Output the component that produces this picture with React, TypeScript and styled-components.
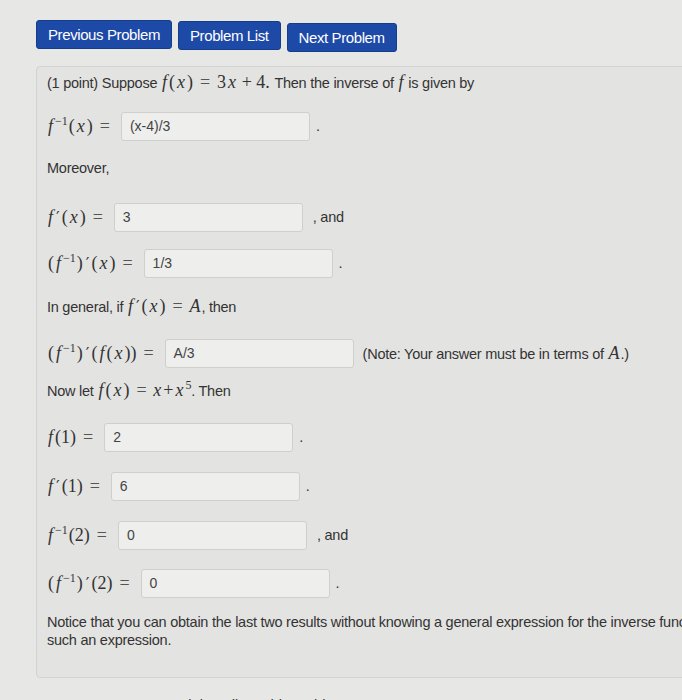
import styled, { createGlobalStyle } from "styled-components";
import React from "react";

const GlobalStyle = createGlobalStyle`
  html, body {
    margin: 0;
    padding: 0;
    background: #e7e7e6;
    overflow: hidden;
  }
  body {
    font-family: "Liberation Sans", Arial, sans-serif;
    color: #333;
  }
`;

const Page = styled.div`
  width: 682px;
  height: 700px;
  padding: 20px 0 0 36px;
  box-sizing: border-box;
  overflow: hidden;
`;

const Nav = styled.div`
  display: flex;
  gap: 6px;
  align-items: flex-start;
`;

const NavButton = styled.button<{ $drop?: number }>`
  height: 29px;
  margin-top: ${({ $drop }) => $drop || 0}px;
  padding: 0 11px;
  background: #1d49a7;
  border: 1px solid #163c8c;
  border-radius: 3px;
  color: #fff;
  font-family: "Liberation Sans", Arial, sans-serif;
  font-size: 15px;
  letter-spacing: -0.4px;
  cursor: pointer;
`;

const ProblemBox = styled.div`
  width: 760px;
  margin-top: 14px;
  padding: 6px 10px 28px 10px;
  background: #e3e3e2;
  border: 1px solid #d3d3d2;
  border-radius: 4px;
  box-sizing: border-box;
`;

const Line = styled.div<{ $top?: number }>`
  margin-top: ${({ $top }) => $top || 0}px;
  height: 18px;
  font-size: 14.5px;
  line-height: 18px;
  letter-spacing: -0.25px;
  white-space: nowrap;
`;

const AnswerRow = styled.div<{ $top?: number }>`
  display: flex;
  align-items: center;
  height: 30px;
  margin-top: ${({ $top }) => $top || 0}px;
  font-size: 14.5px;
`;

const Label = styled.span`
  margin-right: 5px;
  white-space: nowrap;
  line-height: 18px;
`;

const AnswerInput = styled.div`
  width: 189px;
  height: 29px;
  box-sizing: border-box;
  padding: 0 8px;
  display: flex;
  align-items: center;
  background: #eeeeed;
  border: 1px solid #cfcfce;
  border-radius: 3px;
  font-size: 14px;
  color: #444;
`;

const After = styled.span<{ $gap?: number }>`
  margin-left: ${({ $gap }) => $gap || 6}px;
  font-size: 14.5px;
  letter-spacing: -0.25px;
  white-space: nowrap;
`;

const M = styled.span`
  font-family: "Liberation Serif", "DejaVu Serif", serif;
  font-style: italic;
  font-size: 18px;
  line-height: 18px;
  letter-spacing: 0;
  padding: 0 1px;
`;

const R = styled.span`
  font-family: "Liberation Serif", "DejaVu Serif", serif;
  font-style: normal;
  font-size: 18px;
  line-height: 18px;
  letter-spacing: 0;
  padding: 0 1px;
`;

const Sup = styled.sup`
  font-family: "Liberation Serif", "DejaVu Serif", serif;
  font-size: 12px;
  line-height: 0;
  vertical-align: 7px;
  font-style: normal;
  margin-left: 1px;
`;

const Prime = styled.span`
  font-family: "DejaVu Serif", serif;
  font-size: 16px;
  line-height: 18px;
  margin: 0 1px 0 2px;
`;

const Eq = styled.span`
  font-family: "Liberation Serif", serif;
  font-style: normal;
  font-size: 18px;
  line-height: 18px;
  margin: 0 6px;
  color: #555;
`;

const Cut = styled.div`
  margin-top: 18px;
  height: 10px;
  overflow: hidden;
  font-size: 14.5px;
  line-height: 18px;
`;

const FInv = () => (
  <>
    <M>f</M>
    <Sup>−1</Sup>
  </>
);

const FInvPrime = () => (
  <>
    <R>(</R>
    <M>f</M>
    <Sup>−1</Sup>
    <R>)</R>
    <Prime>′</Prime>
  </>
);

export default function App() {
  return (
    <>
      <GlobalStyle />
      <Page>
        <Nav>
          <NavButton>Previous Problem</NavButton>
          <NavButton $drop={1}>Problem List</NavButton>
          <NavButton $drop={3}>Next Problem</NavButton>
        </Nav>
        <ProblemBox>
          <Line>
            (1 point) Suppose <M>f</M>
            <R>(</R>
            <M>x</M>
            <R>)</R>
            <Eq>=</Eq>
            <R>3</R>
            <M>x</M> <R>+ 4.</R> Then the inverse of <M>f</M> is given by
          </Line>

          <AnswerRow $top={20}>
            <Label>
              <FInv />
              <R>(</R>
              <M>x</M>
              <R>)</R>
              <Eq>=</Eq>
            </Label>
            <AnswerInput>(x-4)/3</AnswerInput>
            <After>.</After>
          </AnswerRow>

          <Line $top={18}>Moreover,</Line>

          <AnswerRow $top={25}>
            <Label>
              <M>f</M>
              <Prime>′</Prime>
              <R>(</R>
              <M>x</M>
              <R>)</R>
              <Eq>=</Eq>
            </Label>
            <AnswerInput>3</AnswerInput>
            <After $gap={10}>, and</After>
          </AnswerRow>

          <AnswerRow $top={16}>
            <Label>
              <FInvPrime />
              <R>(</R>
              <M>x</M>
              <R>)</R>
              <Eq>=</Eq>
            </Label>
            <AnswerInput>1/3</AnswerInput>
            <After>.</After>
          </AnswerRow>

          <Line $top={19}>
            In general, if <M>f</M>
            <Prime>′</Prime>
            <R>(</R>
            <M>x</M>
            <R>)</R>
            <Eq>=</Eq>
            <M>A</M>, then
          </Line>

          <AnswerRow $top={23}>
            <Label>
              <FInvPrime />
              <R>(</R>
              <M>f</M>
              <R>(</R>
              <M>x</M>
              <R>))</R>
              <Eq>=</Eq>
            </Label>
            <AnswerInput>A/3</AnswerInput>
            <After $gap={9}>
              (Note: Your answer must be in terms of <M>A</M>.)
            </After>
          </AnswerRow>

          <Line $top={13}>
            Now let <M>f</M>
            <R>(</R>
            <M>x</M>
            <R>)</R>
            <Eq>=</Eq>
            <M>x</M>
            <R>+</R>
            <M>x</M>
            <Sup>5</Sup>. Then
          </Line>

          <AnswerRow $top={23}>
            <Label>
              <M>f</M>
              <R>(1)</R>
              <Eq>=</Eq>
            </Label>
            <AnswerInput>2</AnswerInput>
            <After>.</After>
          </AnswerRow>

          <AnswerRow $top={19}>
            <Label>
              <M>f</M>
              <Prime>′</Prime>
              <R>(1)</R>
              <Eq>=</Eq>
            </Label>
            <AnswerInput>6</AnswerInput>
            <After>.</After>
          </AnswerRow>

          <AnswerRow $top={19}>
            <Label>
              <FInv />
              <R>(2)</R>
              <Eq>=</Eq>
            </Label>
            <AnswerInput>0</AnswerInput>
            <After $gap={10}>, and</After>
          </AnswerRow>

          <AnswerRow $top={18}>
            <Label>
              <FInvPrime />
              <R>(2)</R>
              <Eq>=</Eq>
            </Label>
            <AnswerInput>0</AnswerInput>
            <After>.</After>
          </AnswerRow>

          <Line $top={15}>
            Notice that you can obtain the last two results without knowing a
            general expression for the inverse function, since we do not have
          </Line>
          <Line>such an expression.</Line>
        </ProblemBox>
        <Cut>Note: You can earn partial credit on this problem.</Cut>
      </Page>
    </>
  );
}
